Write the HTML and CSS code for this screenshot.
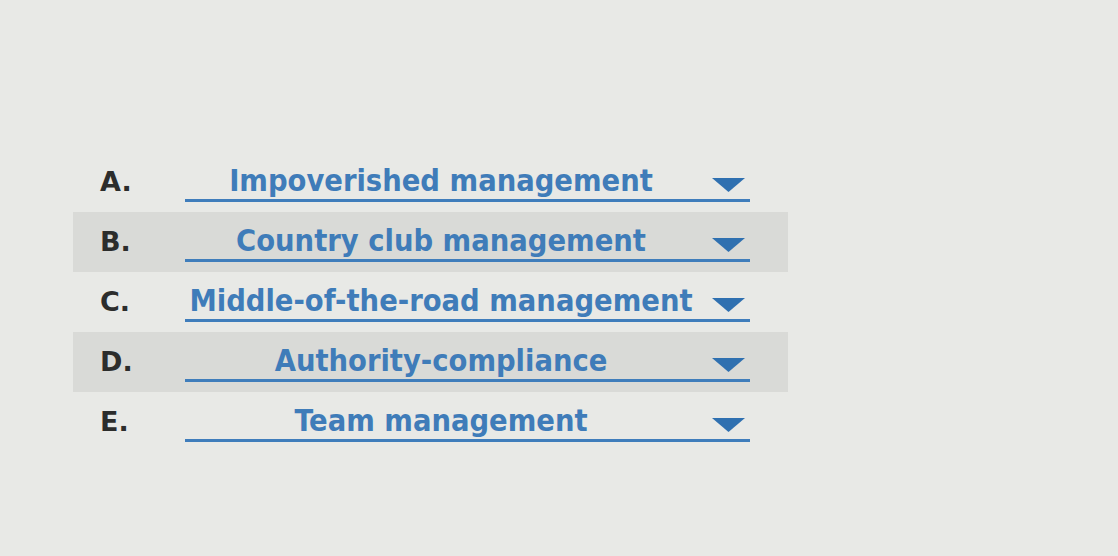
FILE: index.html
```html
<!DOCTYPE html>
<html lang="en">
<head>
    <meta charset="UTF-8">
    <meta name="viewport" content="width=device-width, initial-scale=1.0">
    <title>Leadership Grid</title>
    <link rel="stylesheet" href="styles.css">
</head>
<body>

    <div class="choices">
        <div class="choice-row">
            <span class="choice-letter">A.</span>
            <div class="dropdown">
                <span class="dropdown-value">Impoverished management</span>
                <span class="dropdown-arrow"><svg width="33" height="14" viewBox="0 0 33 14"><polygon points="0,0 33,0 16.5,14"/></svg></span>
            </div>
        </div>
        <div class="choice-row shaded">
            <span class="choice-letter">B.</span>
            <div class="dropdown">
                <span class="dropdown-value">Country club management</span>
                <span class="dropdown-arrow"><svg width="33" height="14" viewBox="0 0 33 14"><polygon points="0,0 33,0 16.5,14"/></svg></span>
            </div>
        </div>
        <div class="choice-row">
            <span class="choice-letter">C.</span>
            <div class="dropdown">
                <span class="dropdown-value">Middle-of-the-road management</span>
                <span class="dropdown-arrow"><svg width="33" height="14" viewBox="0 0 33 14"><polygon points="0,0 33,0 16.5,14"/></svg></span>
            </div>
        </div>
        <div class="choice-row shaded">
            <span class="choice-letter">D.</span>
            <div class="dropdown">
                <span class="dropdown-value">Authority-compliance</span>
                <span class="dropdown-arrow"><svg width="33" height="14" viewBox="0 0 33 14"><polygon points="0,0 33,0 16.5,14"/></svg></span>
            </div>
        </div>
        <div class="choice-row">
            <span class="choice-letter">E.</span>
            <div class="dropdown">
                <span class="dropdown-value">Team management</span>
                <span class="dropdown-arrow"><svg width="33" height="14" viewBox="0 0 33 14"><polygon points="0,0 33,0 16.5,14"/></svg></span>
            </div>
        </div>
    </div>

</body>
</html>
```

FILE: styles.css
```css
body {
    margin: 0;
    height: 556px;
    font-family: "DejaVu Sans", Verdana, sans-serif;
    background-color: #e8e9e6;
}
.choices {
    padding-top: 152px;
    margin-left: 73px;
    width: 715px;
}
.choice-row {
    display: flex;
    align-items: flex-start;
    height: 60px;
    box-sizing: border-box;
    padding-top: 8px;
}
.shaded {
    background-color: #d9dad7;
}
.choice-letter {
    width: 85px;
    padding-left: 27px;
    padding-top: 6px;
    font-size: 27px;
    font-weight: bold;
    color: #2c2d2c;
}
.dropdown {
    display: flex;
    align-items: flex-end;
    width: 565px;
    height: 42px;
    box-sizing: border-box;
    border-bottom: 3px solid #3f7dbb;
}
.dropdown-value {
    flex: 1;
    padding-bottom: 3px;
    text-align: center;
    font-family: "DejaVu Sans Condensed", "DejaVu Sans", sans-serif;
    font-size: 30.5px;
    font-weight: bold;
    line-height: 1;
    color: #3f7cb9;
    white-space: nowrap;
}
.dropdown-arrow {
    width: 53px;
    box-sizing: border-box;
    padding: 0 5px 7px 0;
    display: flex;
    justify-content: flex-end;
}
.dropdown-arrow svg {
    display: block;
    fill: #2f70b0;
}
```
